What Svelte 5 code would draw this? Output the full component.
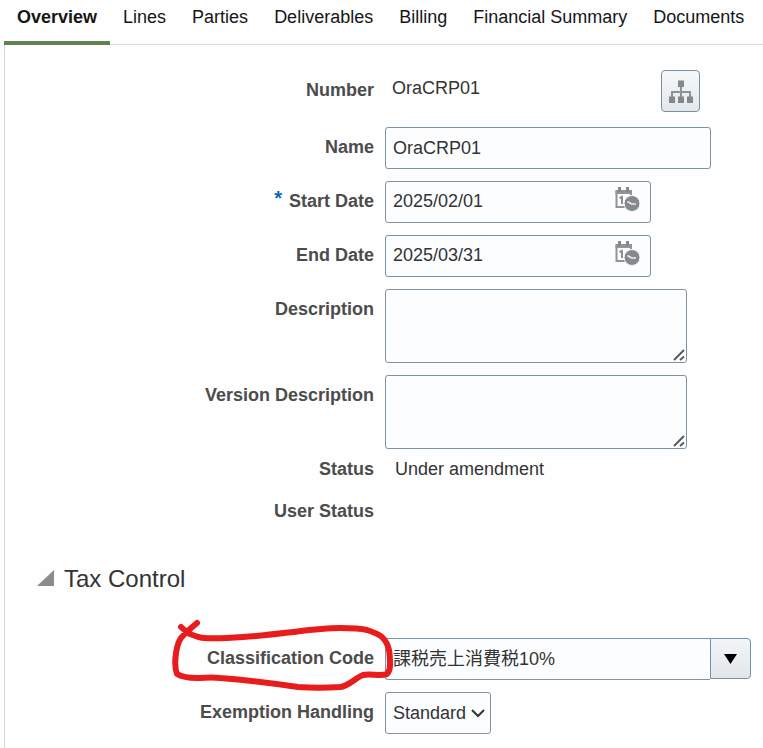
<script>
  const tabs = ['Overview', 'Lines', 'Parties', 'Deliverables', 'Billing', 'Financial Summary', 'Documents'];
  let name = $state('OraCRP01');
  let startDate = $state('2025/02/01');
  let endDate = $state('2025/03/31');
  let description = $state('');
  let versionDescription = $state('');
  let taxCode = $state('課税売上消費税10%');
  let exemption = $state('Standard');
  let open = $state(true);
</script>

{#snippet calendar()}
  <svg width="26" height="26" viewBox="0 0 26 26" aria-hidden="true">
    <path d="M1.500 4V20H10M16 5V9" fill="none" stroke="#8f9497" stroke-width="2" />
    <path d="M0.500 3H17V7H0.500Z" fill="#8f9497" />
    <path d="M3 0H6V5H3ZM11 0H14V5H11Z" fill="#84898c" />
    <path d="M4.500 11L7 10V17" fill="none" stroke="#8a8f92" stroke-width="2" />
    <circle cx="17" cy="16.500" r="8" fill="#83898c" stroke="#fcfdff" stroke-width="1" />
    <path d="M12.500 14.500L16.500 17H21" fill="none" stroke="#eceeef" stroke-width="1.600" />
  </svg>
{/snippet}

{#snippet grip()}
  <svg class="grip" width="12" height="12" viewBox="0 0 12 12" aria-hidden="true">
    <path d="M1 11L11 1M7 11L11 7.500" fill="none" stroke="#555" stroke-width="1.800" />
  </svg>
{/snippet}

<nav aria-label="Contract sections">
  {#each tabs as tab, i}
    <a href="#{tab.toLowerCase().replace(' ', '-')}" class:active={i === 0} aria-current={i === 0 ? 'page' : undefined}>{tab}</a>
  {/each}
</nav>

<main>
  <div class="row first">
    <span class="label">Number</span>
    <div class="number">
      <span class="value">OraCRP01</span>
      <button class="tree" type="button" aria-label="View hierarchy">
        <svg width="26" height="26" viewBox="0 0 26 26" aria-hidden="true">
          <path d="M13 7V19M4 19V14H22V19" fill="none" stroke="#8e9396" stroke-width="2" />
          <path d="M10 2.500H16V9H10ZM1 18.500H7V25H1ZM10 18.500H16V25H10ZM19 18.500H25V25H19Z" fill="#83888b" />
        </svg>
      </button>
    </div>
  </div>
  <div class="row">
    <label class="label" for="name">Name</label>
    <input id="name" class="box wide" bind:value={name} />
  </div>
  <div class="row">
    <label class="label" for="start"><span class="star">*</span> Start Date</label>
    <div class="box date">
      <input id="start" required bind:value={startDate} />
      <button type="button" aria-label="Select start date">{@render calendar()}</button>
    </div>
  </div>
  <div class="row">
    <label class="label" for="end">End Date</label>
    <div class="box date">
      <input id="end" bind:value={endDate} />
      <button type="button" aria-label="Select end date">{@render calendar()}</button>
    </div>
  </div>
  <div class="row">
    <label class="label" for="description">Description</label>
    <div class="area">
      <textarea id="description" class="box" bind:value={description}></textarea>
      {@render grip()}
    </div>
  </div>
  <div class="row">
    <label class="label" for="version">Version Description</label>
    <div class="area">
      <textarea id="version" class="box" bind:value={versionDescription}></textarea>
      {@render grip()}
    </div>
  </div>
  <div class="row text">
    <span class="label">Status</span>
    <span class="status">Under amendment</span>
  </div>
  <div class="row text">
    <span class="label">User Status</span>
  </div>

  <h2>
    <button type="button" aria-expanded={open} onclick={() => (open = !open)}>
      <svg width="18" height="18" viewBox="0 0 18 18" aria-hidden="true"><path d="M17 0V16H0Z" fill="#878d91" /></svg>
      Tax Control
    </button>
  </h2>

  {#if open}
    <div class="row marked">
      <label class="label" for="tax">Classification Code</label>
      <div class="combo">
        <input id="tax" class="box" bind:value={taxCode} />
        <button type="button" aria-label="Show classification codes">
          <svg width="14" height="10" viewBox="0 0 14 10" aria-hidden="true"><path d="M0 0H13L6.500 10Z" fill="#000" /></svg>
        </button>
      </div>
      <svg class="ink" width="224" height="76" viewBox="0 0 224 76" aria-hidden="true">
        <path
          d="M9 9C12 12 15 14 18 16C23 18 28 20 32 20C45 21 58 20 71 19C88 18 104 16 121 14C137 12 152 10 168 10C178 10 187 10 195 12C201 14 207 16 210 19C214 23 216 27 217 32C218 37 218 42 218 47C218 51 217 54 215 56C208 59 199 55 191 57C183 60 177 68 168 69C154 70 140 70 126 69C100 65 74 62 48 60C40 59 33 60 25 60C18 60 10 59 5 56C3 51 3 42 4 35C5 29 6 24 9 20C13 15 19 10 25 5"
          fill="none" stroke="#e81c1c" stroke-width="6" stroke-linecap="round" stroke-linejoin="round" />
      </svg>
    </div>
    <div class="row">
      <label class="label" for="exemption">Exemption Handling</label>
      <div class="select">
        <select id="exemption" class="box" bind:value={exemption}>
          <option>Standard</option>
        </select>
        <svg width="14" height="10" viewBox="0 0 14 10" aria-hidden="true"><path d="M1 2L7 8L13 2" fill="none" stroke="#333" stroke-width="2" /></svg>
      </div>
    </div>
  {/if}
</main>

<style>
  :global(body) {
    background: #fefefe;
    color: #333;
    font: 18px/20px 'Liberation Sans', 'Noto Sans CJK JP', Arial, sans-serif;
  }
  input, textarea, select, button {
    box-sizing: border-box;
    margin: 0;
    font: inherit;
    color: inherit;
  }
  button {
    display: flex;
    align-items: center;
    justify-content: center;
    padding: 0;
    border: 0;
    background: none;
    cursor: pointer;
  }
  nav {
    display: flex;
    margin-left: 4px;
    box-shadow: inset 0 -1px #d3dce4;
    overflow: hidden;
  }
  nav a {
    padding: 7px 13px 14px;
    border-bottom: 4px solid transparent;
    color: #161616;
    text-decoration: none;
    white-space: nowrap;
  }
  nav a.active {
    border-color: #628150;
    font-weight: bold;
  }
  main {
    margin-left: 4px;
    padding: 19px 12px 8px 0;
    border-left: 1px solid #d3dce4;
  }
  .row {
    display: grid;
    grid-template-columns: 369px minmax(0, 1fr);
    column-gap: 11px;
    padding: 6px 0;
  }
  .row.first {
    margin-bottom: 3px;
  }
  .row.text {
    padding: 4px 0;
    margin-bottom: 14px;
  }
  .label {
    color: #4c4c4c;
    font-weight: bold;
    line-height: 40px;
    text-align: right;
  }
  .text .label {
    line-height: 20px;
  }
  .star {
    margin-right: 2px;
    color: #0a67b0;
    font-size: 20px;
    line-height: 20px;
    vertical-align: 2px;
  }
  .box {
    height: 42px;
    border: 1px solid #7d94a4;
    border-radius: 3px;
    background: #fcfdff;
    padding: 0 7px;
  }
  .wide {
    width: 100%;
    max-width: 326px;
  }
  .number {
    display: flex;
    justify-content: space-between;
    max-width: 315px;
  }
  .value {
    padding: 8px 7px;
  }
  .tree {
    width: 39px;
    height: 42px;
    border: 1px solid #7790a4;
    border-radius: 4px;
    background: linear-gradient(#f5f8fa, #e4e8eb);
  }
  .date {
    box-sizing: border-box;
    display: flex;
    max-width: 266px;
    padding: 0;
  }
  .date input {
    flex: 1;
    min-width: 0;
    padding: 0 7px 2px;
    border: 0;
    background: none;
  }
  .date button {
    align-items: flex-start;
    padding: 5px 9px;
  }
  .area {
    position: relative;
    max-width: 302px;
  }
  textarea {
    display: block;
    width: 100%;
    resize: none;
  }
  textarea.box {
    height: 74px;
    padding: 8px 7px;
  }
  .grip {
    position: absolute;
    right: 2px;
    bottom: 2px;
    pointer-events: none;
  }
  .status {
    padding-left: 10px;
  }
  h2 {
    margin: 39px 0 38px 32px;
    font-size: 24px;
    font-weight: normal;
    line-height: 30px;
  }
  h2 button {
    gap: 9px;
  }
  .marked {
    position: relative;
  }
  .combo {
    display: flex;
    align-items: flex-start;
  }
  .combo input {
    flex: 1;
    min-width: 0;
    padding-bottom: 4px;
    border-right: 0;
    border-radius: 3px 0 0 3px;
  }
  .combo button {
    width: 41px;
    height: 41px;
    border: 1px solid #7790a4;
    border-radius: 0 4px 4px 0;
    background: linear-gradient(#f3f6f8, #e2e6e9);
  }
  .ink {
    position: absolute;
    left: 167px;
    top: -14px;
    pointer-events: none;
  }
  .select {
    position: relative;
    width: 106px;
  }
  .select select {
    width: 100%;
    appearance: none;
  }
  .select svg {
    position: absolute;
    right: 6px;
    top: 16px;
    pointer-events: none;
  }
</style>
